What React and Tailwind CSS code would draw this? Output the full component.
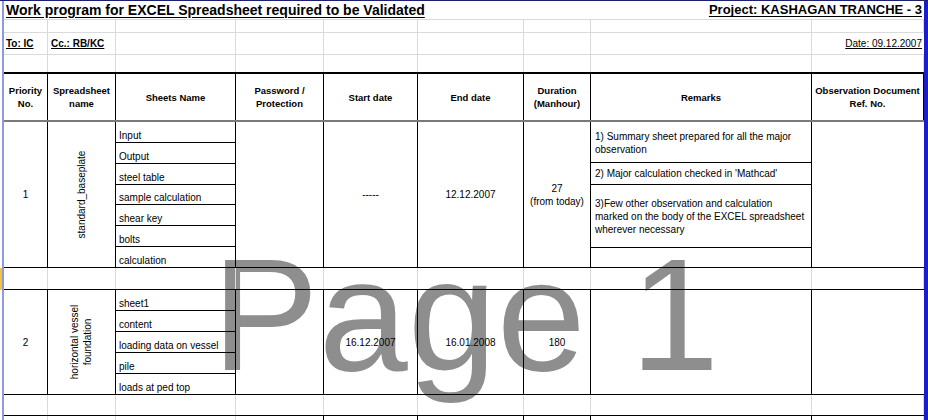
import React from "react";

const cols = "grid grid-cols-[44px_68px_120px_88px_94px_106px_67px_221px_112px]";
const light = "border-[#d9dadb]";

function BlankRow({ h, bottom = "border-[#d9dadb]" }) {
    return (
        <div className={`${cols} ${h} border-b ${bottom}`}>
            {Array.from({ length: 9 }).map((_, i) => (
                <div key={i} className={`border-r ${light}`} />
            ))}
        </div>
    );
}

function SubRows({ items }) {
    return (
        <div className="flex flex-col border-r border-black">
            {items.map((t, i) => (
                <div
                    key={t}
                    className={`flex-1 flex items-end pl-[3px] ${
                        i < items.length - 1 ? "border-b border-black" : ""
                    }`}
                >
                    {t}
                </div>
            ))}
        </div>
    );
}

export default function App() {
    const sheets1 = [
        "Input",
        "Output",
        "steel table",
        "sample calculation",
        "shear key",
        "bolts",
        "calculation",
    ];
    const sheets2 = [
        "sheet1",
        "content",
        "loading data on vessel",
        "pile",
        "loads at ped top",
    ];

    return (
        <div className="relative w-[928px] h-[420px] overflow-hidden bg-white font-['Liberation_Sans',Arial,sans-serif] text-black border-t border-[#1b1f6e]">
            {/* watermark */}
            <div className="absolute left-[212px] top-[234px] text-[160px] leading-none text-[#8e8e8e] whitespace-nowrap pointer-events-none">
                Page 1
            </div>

            <div className="relative flex h-full">
                {/* left gutter */}
                <div className="w-[4px] flex flex-col border-r-2 border-[#8c9be0]">
                    <div className="h-[267px]" />
                    <div className="h-[22px] bg-[#f3c33f]" />
                </div>

                <div className="w-[920px] flex flex-col">
                    {/* title */}
                    <div className={`h-[19px] flex items-center justify-between border-b ${light} pl-[2px] pr-[2px] font-bold`}>
                        <span className="text-[14px] underline underline-offset-2">
                            Work program for EXCEL Spreadsheet required to be Validated
                        </span>
                        <span className="text-[13px] underline underline-offset-2">
                            Project: KASHAGAN TRANCHE - 3
                        </span>
                    </div>

                    <BlankRow h="h-[13px]" />

                    {/* To / Cc / Date */}
                    <div className={`${cols} h-[22px] border-b ${light} text-[10px]`}>
                        <div className={`border-r ${light} flex items-center pl-[2px] font-bold underline`}>
                            To: IC
                        </div>
                        <div className={`border-r ${light} flex items-center pl-[3px] font-bold underline`}>
                            Cc.: RB/KC
                        </div>
                        {Array.from({ length: 6 }).map((_, i) => (
                            <div key={i} className={`border-r ${light}`} />
                        ))}
                        <div className="flex items-center justify-end pr-[2px] underline">
                            Date: 09.12.2007
                        </div>
                    </div>

                    <div className={`${cols} h-[17px]`}>
                        {Array.from({ length: 9 }).map((_, i) => (
                            <div key={i} className={`border-r ${light}`} />
                        ))}
                    </div>

                    {/* header */}
                    <div className={`${cols} h-[50px] border-t-2 border-b-2 border-t-black border-b-[#7a7a7a] text-[9.5px] leading-[13px] font-bold text-center`}>
                        {[
                            ["Priority", "No."],
                            ["Spreadsheet", "name"],
                            ["Sheets Name"],
                            ["Password /", "Protection"],
                            ["Start date"],
                            ["End date"],
                            ["Duration", "(Manhour)"],
                            ["Remarks"],
                            ["Observation Document", "Ref. No."],
                        ].map((lines, i) => (
                            <div
                                key={i}
                                className="flex flex-col items-center justify-center border-r border-black whitespace-nowrap"
                            >
                                {lines.map((l) => (
                                    <span key={l}>{l}</span>
                                ))}
                            </div>
                        ))}
                    </div>

                    {/* row 1 */}
                    <div className={`${cols} h-[146px] border-b border-black text-[10px] leading-[13px]`}>
                        <div className="flex items-center justify-center border-r border-black">1</div>
                        <div className="flex items-center justify-center border-r border-black">
                            <span className="-rotate-90 whitespace-nowrap">standard_baseplate</span>
                        </div>
                        <SubRows items={sheets1} />
                        <div className="border-r border-black" />
                        <div className="flex items-center justify-center border-r border-black">-----</div>
                        <div className="flex items-center justify-center border-r border-black">12.12.2007</div>
                        <div className="flex flex-col items-center justify-center border-r border-black text-center">
                            <span>27</span>
                            <span>(from today)</span>
                        </div>
                        <div className="flex flex-col border-r border-black">
                            <div className="h-[41px] flex items-center px-[4px] pt-[2px] border-b border-black">
                                1) Summary sheet prepared for all the major observation
                            </div>
                            <div className="h-[22px] flex items-center px-[4px] border-b border-black">
                                2) Major calculation checked in 'Mathcad'
                            </div>
                            <div className="h-[63px] flex items-center px-[4px] border-b border-black">
                                3)Few other observation and calculation marked on the body of the EXCEL spreadsheet wherever necessary
                            </div>
                            <div className="flex-1" />
                        </div>
                        <div />
                    </div>

                    <BlankRow h="h-[22px]" bottom="border-black" />

                    {/* row 2 */}
                    <div className={`${cols} h-[105px] border-b border-black text-[10px] leading-[13px]`}>
                        <div className="flex items-center justify-center border-r border-black">2</div>
                        <div className="flex items-center justify-center border-r border-black">
                            <span className="-rotate-90 whitespace-nowrap text-center flex flex-col">
                                <span>horizontal vessel</span>
                                <span>foundation</span>
                            </span>
                        </div>
                        <SubRows items={sheets2} />
                        <div className="border-r border-black" />
                        <div className="flex items-center justify-center border-r border-black">16.12.2007</div>
                        <div className="flex items-center justify-center border-r border-black">16.01.2008</div>
                        <div className="flex items-center justify-center border-r border-black">180</div>
                        <div className="border-r border-black" />
                        <div />
                    </div>

                    <BlankRow h="h-[21px]" bottom="border-black" />

                    <div className={`${cols} flex-1`}>
                        {Array.from({ length: 9 }).map((_, i) => (
                            <div key={i} className={`border-r ${i < 3 || i === 8 ? light : "border-black"}`} />
                        ))}
                    </div>
                </div>

                {/* right edge */}
                <div className="w-[4px] bg-[#1c1cc8]" />
            </div>
        </div>
    );
}
